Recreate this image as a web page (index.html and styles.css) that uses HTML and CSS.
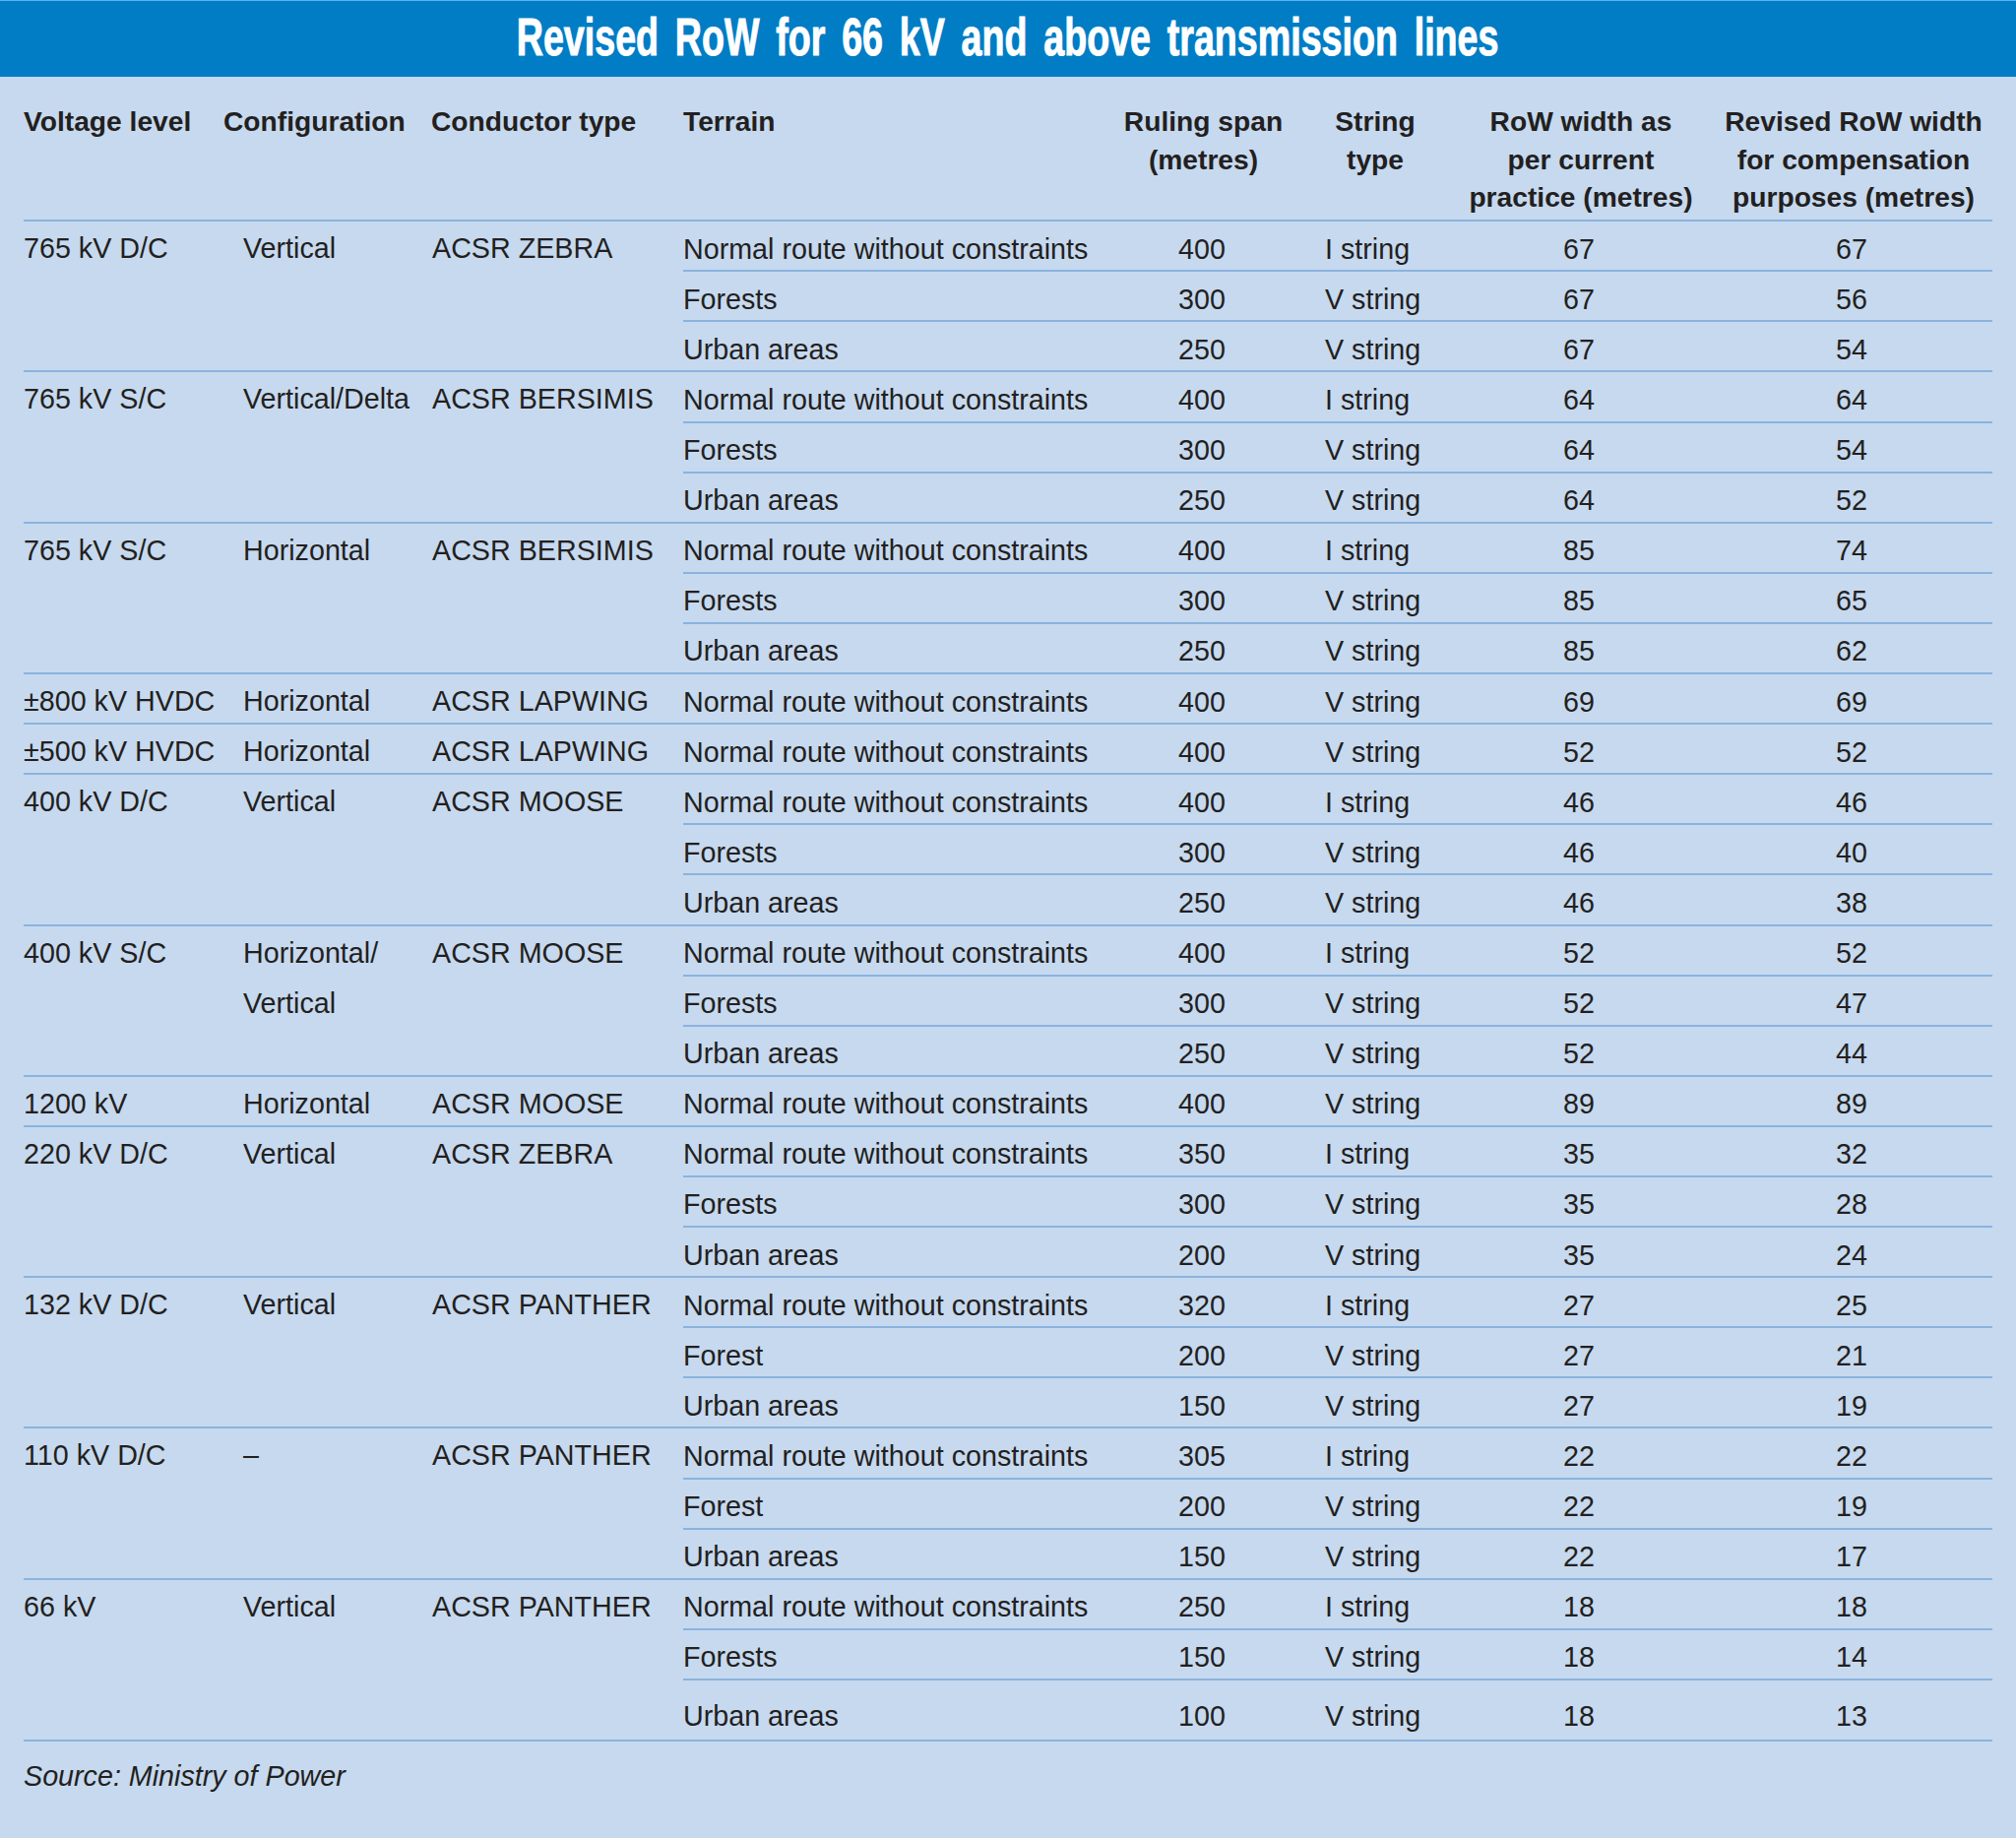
FILE: index.html
```html
<!DOCTYPE html>
<html lang="en">
<head>
<meta charset="utf-8">
<title>Revised RoW for 66 kV and above transmission lines</title>
<link rel="stylesheet" href="styles.css">
</head>
<body>
<div class="page">
  <div class="title"><span class="title-text">Revised RoW for 66 kV and above transmission lines</span></div>
  <div class="table">
    <div class="thead">
      <div class="th">Voltage level</div>
      <div class="th">Configuration</div>
      <div class="th">Conductor type</div>
      <div class="th">Terrain</div>
      <div class="th th-c c-span">Ruling span<br>(metres)</div>
      <div class="th th-c">String<br>type</div>
      <div class="th th-c c-cur">RoW width as<br>per current<br>practice (metres)</div>
      <div class="th th-c c-rev">Revised RoW width<br>for compensation<br>purposes (metres)</div>
    </div>

    <div class="group">
      <div class="gcell">765 kV D/C</div>
      <div class="gcell g-conf">Vertical</div>
      <div class="gcell g-cond">ACSR ZEBRA</div>
      <div class="subrows">
        <div class="row"><div>Normal route without constraints</div><div class="num">400</div><div class="str">I string</div><div class="num cur">67</div><div class="num rev">67</div></div>
        <div class="row"><div>Forests</div><div class="num">300</div><div class="str">V string</div><div class="num cur">67</div><div class="num rev">56</div></div>
        <div class="row"><div>Urban areas</div><div class="num">250</div><div class="str">V string</div><div class="num cur">67</div><div class="num rev">54</div></div>
      </div>
    </div>

    <div class="group">
      <div class="gcell">765 kV S/C</div>
      <div class="gcell g-conf">Vertical/Delta</div>
      <div class="gcell g-cond">ACSR BERSIMIS</div>
      <div class="subrows">
        <div class="row"><div>Normal route without constraints</div><div class="num">400</div><div class="str">I string</div><div class="num cur">64</div><div class="num rev">64</div></div>
        <div class="row"><div>Forests</div><div class="num">300</div><div class="str">V string</div><div class="num cur">64</div><div class="num rev">54</div></div>
        <div class="row"><div>Urban areas</div><div class="num">250</div><div class="str">V string</div><div class="num cur">64</div><div class="num rev">52</div></div>
      </div>
    </div>

    <div class="group">
      <div class="gcell">765 kV S/C</div>
      <div class="gcell g-conf">Horizontal</div>
      <div class="gcell g-cond">ACSR BERSIMIS</div>
      <div class="subrows">
        <div class="row"><div>Normal route without constraints</div><div class="num">400</div><div class="str">I string</div><div class="num cur">85</div><div class="num rev">74</div></div>
        <div class="row"><div>Forests</div><div class="num">300</div><div class="str">V string</div><div class="num cur">85</div><div class="num rev">65</div></div>
        <div class="row"><div>Urban areas</div><div class="num">250</div><div class="str">V string</div><div class="num cur">85</div><div class="num rev">62</div></div>
      </div>
    </div>

    <div class="group">
      <div class="gcell">±800 kV HVDC</div>
      <div class="gcell g-conf">Horizontal</div>
      <div class="gcell g-cond">ACSR LAPWING</div>
      <div class="subrows">
        <div class="row"><div>Normal route without constraints</div><div class="num">400</div><div class="str">V string</div><div class="num cur">69</div><div class="num rev">69</div></div>
      </div>
    </div>

    <div class="group">
      <div class="gcell">±500 kV HVDC</div>
      <div class="gcell g-conf">Horizontal</div>
      <div class="gcell g-cond">ACSR LAPWING</div>
      <div class="subrows">
        <div class="row"><div>Normal route without constraints</div><div class="num">400</div><div class="str">V string</div><div class="num cur">52</div><div class="num rev">52</div></div>
      </div>
    </div>

    <div class="group">
      <div class="gcell">400 kV D/C</div>
      <div class="gcell g-conf">Vertical</div>
      <div class="gcell g-cond">ACSR MOOSE</div>
      <div class="subrows">
        <div class="row"><div>Normal route without constraints</div><div class="num">400</div><div class="str">I string</div><div class="num cur">46</div><div class="num rev">46</div></div>
        <div class="row"><div>Forests</div><div class="num">300</div><div class="str">V string</div><div class="num cur">46</div><div class="num rev">40</div></div>
        <div class="row"><div>Urban areas</div><div class="num">250</div><div class="str">V string</div><div class="num cur">46</div><div class="num rev">38</div></div>
      </div>
    </div>

    <div class="group">
      <div class="gcell">400 kV S/C</div>
      <div class="gcell g-conf">Horizontal/<br>Vertical</div>
      <div class="gcell g-cond">ACSR MOOSE</div>
      <div class="subrows">
        <div class="row"><div>Normal route without constraints</div><div class="num">400</div><div class="str">I string</div><div class="num cur">52</div><div class="num rev">52</div></div>
        <div class="row"><div>Forests</div><div class="num">300</div><div class="str">V string</div><div class="num cur">52</div><div class="num rev">47</div></div>
        <div class="row"><div>Urban areas</div><div class="num">250</div><div class="str">V string</div><div class="num cur">52</div><div class="num rev">44</div></div>
      </div>
    </div>

    <div class="group">
      <div class="gcell">1200 kV</div>
      <div class="gcell g-conf">Horizontal</div>
      <div class="gcell g-cond">ACSR MOOSE</div>
      <div class="subrows">
        <div class="row"><div>Normal route without constraints</div><div class="num">400</div><div class="str">V string</div><div class="num cur">89</div><div class="num rev">89</div></div>
      </div>
    </div>

    <div class="group">
      <div class="gcell">220 kV D/C</div>
      <div class="gcell g-conf">Vertical</div>
      <div class="gcell g-cond">ACSR ZEBRA</div>
      <div class="subrows">
        <div class="row"><div>Normal route without constraints</div><div class="num">350</div><div class="str">I string</div><div class="num cur">35</div><div class="num rev">32</div></div>
        <div class="row"><div>Forests</div><div class="num">300</div><div class="str">V string</div><div class="num cur">35</div><div class="num rev">28</div></div>
        <div class="row"><div>Urban areas</div><div class="num">200</div><div class="str">V string</div><div class="num cur">35</div><div class="num rev">24</div></div>
      </div>
    </div>

    <div class="group">
      <div class="gcell">132 kV D/C</div>
      <div class="gcell g-conf">Vertical</div>
      <div class="gcell g-cond">ACSR PANTHER</div>
      <div class="subrows">
        <div class="row"><div>Normal route without constraints</div><div class="num">320</div><div class="str">I string</div><div class="num cur">27</div><div class="num rev">25</div></div>
        <div class="row"><div>Forest</div><div class="num">200</div><div class="str">V string</div><div class="num cur">27</div><div class="num rev">21</div></div>
        <div class="row"><div>Urban areas</div><div class="num">150</div><div class="str">V string</div><div class="num cur">27</div><div class="num rev">19</div></div>
      </div>
    </div>

    <div class="group">
      <div class="gcell">110 kV D/C</div>
      <div class="gcell g-conf">–</div>
      <div class="gcell g-cond">ACSR PANTHER</div>
      <div class="subrows">
        <div class="row"><div>Normal route without constraints</div><div class="num">305</div><div class="str">I string</div><div class="num cur">22</div><div class="num rev">22</div></div>
        <div class="row"><div>Forest</div><div class="num">200</div><div class="str">V string</div><div class="num cur">22</div><div class="num rev">19</div></div>
        <div class="row"><div>Urban areas</div><div class="num">150</div><div class="str">V string</div><div class="num cur">22</div><div class="num rev">17</div></div>
      </div>
    </div>

    <div class="group">
      <div class="gcell">66 kV</div>
      <div class="gcell g-conf">Vertical</div>
      <div class="gcell g-cond">ACSR PANTHER</div>
      <div class="subrows">
        <div class="row"><div>Normal route without constraints</div><div class="num">250</div><div class="str">I string</div><div class="num cur">18</div><div class="num rev">18</div></div>
        <div class="row"><div>Forests</div><div class="num">150</div><div class="str">V string</div><div class="num cur">18</div><div class="num rev">14</div></div>
        <div class="row tall"><div>Urban areas</div><div class="num">100</div><div class="str">V string</div><div class="num cur">18</div><div class="num rev">13</div></div>
      </div>
    </div>
  </div>
  <div class="source">Source: Ministry of Power</div>
</div>
</body>
</html>
```

FILE: styles.css
```css
html, body {
  margin: 0;
  padding: 0;
}

body {
  background: #c6d9ef;
  font-family: "Liberation Sans", Arial, sans-serif;
  color: #231f20;
}

.page {
  width: 2048px;
  min-height: 1867px;
}

.title {
  box-sizing: border-box;
  height: 78px;
  border-top: 1px solid #5ab4ea;
  background: #007dc5;
  padding-top: 10px;
  text-align: center;
  line-height: 53.6px;
}

.title-text {
  display: inline-block;
  color: #ffffff;
  font-weight: bold;
  font-size: 53.6px;
  word-spacing: 9px;
  white-space: nowrap;
  -webkit-text-stroke: 1px #ffffff;
  transform: scaleX(0.702);
}

.table {
  margin-left: 24px;
  width: 2000px;
}

.thead {
  display: grid;
  grid-template-columns: 203px 211px 256px 416px 222px 130px 300px 262px;
  padding: 26px 0 3.7px;
  border-bottom: 2px solid #8bb3de;
  font-size: 28.2px;
  font-weight: bold;
  line-height: 38.5px;
}

.th {
  white-space: nowrap;
}

.th-c {
  text-align: center;
  justify-self: center;
}

.c-span {
  margin-left: 3px;
}

.c-cur {
  margin-right: 12px;
}

.c-rev {
  margin-right: 20px;
}

.group {
  display: grid;
  grid-template-columns: 203px 211px 256px 1330px;
  border-bottom: 2px solid #8bb3de;
  font-size: 28.7px;
}

.gcell {
  padding-top: 2px;
  line-height: 51.1px;
  margin-bottom: -6px;
  white-space: nowrap;
}

.g-conf {
  padding-left: 20px;
}

.g-cond {
  padding-left: 1px;
}

.row {
  display: grid;
  grid-template-columns: 416px 222px 130px 300px 262px;
  line-height: 32px;
  padding: 11.5px 0 5.6px;
  border-bottom: 2px solid #8bb3de;
  white-space: nowrap;
}

.row:last-child {
  border-bottom: none;
}

.row.tall {
  padding: 19.7px 0 8.7px;
}

.num {
  text-align: center;
}

.str {
  padding-left: 14px;
}

.cur {
  padding-right: 16px;
}

.rev {
  padding-right: 24px;
}

.source {
  margin: 18.3px 0 0 24px;
  font-style: italic;
  font-size: 28.7px;
  line-height: 32px;
}
```
